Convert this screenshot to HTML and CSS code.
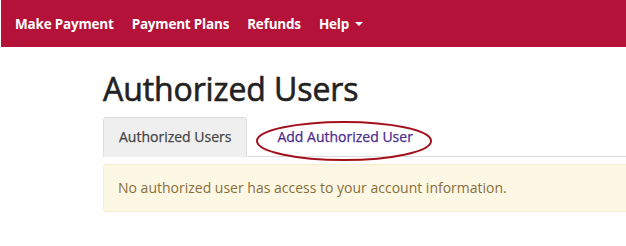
FILE: index.html
```html
<!DOCTYPE html>
<html lang="en">
<head>
  <meta charset="UTF-8">
  <title>Authorized Users</title>
  <link rel="stylesheet" href="styles.css">
</head>
<body>
  <nav class="topnav">
    <a href="#">Make Payment</a>
    <a href="#">Payment Plans</a>
    <a href="#">Refunds</a>
    <a href="#" class="dropdown">Help <span class="caret"></span></a>
  </nav>

  <div class="container">
    <h1>Authorized Users</h1>
    <ul class="tabs">
      <li class="active"><a href="#">Authorized Users</a></li>
      <li class="circled">
        <a href="#">Add Authorized User</a>
        <svg class="ring" width="178" height="42" viewBox="0 0 178 42">
          <ellipse cx="89" cy="21" rx="87" ry="19" fill="none" stroke="#a3101c" stroke-width="2"/>
        </svg>
      </li>
    </ul>
    <div class="alert">No authorized user has access to your account information.</div>
  </div>
</body>
</html>
```

FILE: styles.css
```css
html, body {
  margin: 0;
  padding: 0;
  overflow: hidden;
}
body {
  font-family: "Open Sans", "Noto Sans", sans-serif;
  color: #333;
  background: #fff;
}
.topnav {
  display: flex;
  align-items: center;
  height: 47px;
  background: #b5123a;
  padding: 0 5px;
  margin-left: 1px;
}
.topnav a {
  color: #fff;
  text-decoration: none;
  font-weight: 700;
  font-size: 13.5px;
  padding: 0 9px;
  letter-spacing: -0.2px;
}
.caret {
  display: inline-block;
  width: 0;
  height: 0;
  margin-left: 3px;
  vertical-align: 3px;
  border-top: 4px solid #fff;
  border-left: 4px solid transparent;
  border-right: 4px solid transparent;
}
.container {
  margin-left: 103px;
}
h1 {
  margin: 20px 0 0 0;
  font-size: 32px;
  font-weight: 400;
  line-height: 44px;
  color: #222;
  letter-spacing: -0.1px;
  -webkit-text-stroke: 0.6px #222;
}
.tabs {
  list-style: none;
  margin: 6px 0 0 0;
  padding: 0;
  display: flex;
  border-bottom: 1px solid #ddd;
}
.tabs li {
  margin-bottom: -1px;
}
.tabs a {
  display: block;
  padding: 0 15px;
  height: 38px;
  line-height: 38px;
  font-size: 14px;
  text-decoration: none;
  border: 1px solid transparent;
  border-radius: 4px 4px 0 0;
  -webkit-text-stroke: 0.25px currentColor;
}
.tabs .active a {
  color: #444;
  background: #efefef;
  border-color: #ddd #ddd #efefef;
}
.tabs .circled {
  position: relative;
  margin-left: 14px;
}
.tabs .circled a {
  color: #4a2a8e;
}
.ring {
  position: absolute;
  left: -6px;
  top: 3px;
  pointer-events: none;
}
.alert {
  margin-top: 7px;
  height: 46px;
  line-height: 46px;
  padding: 0 14px;
  background: #fcf8e3;
  border: 1px solid #faebcc;
  border-right: none;
  border-radius: 4px 0 0 4px;
  color: #8a6d3b;
  font-size: 14px;
}
```
